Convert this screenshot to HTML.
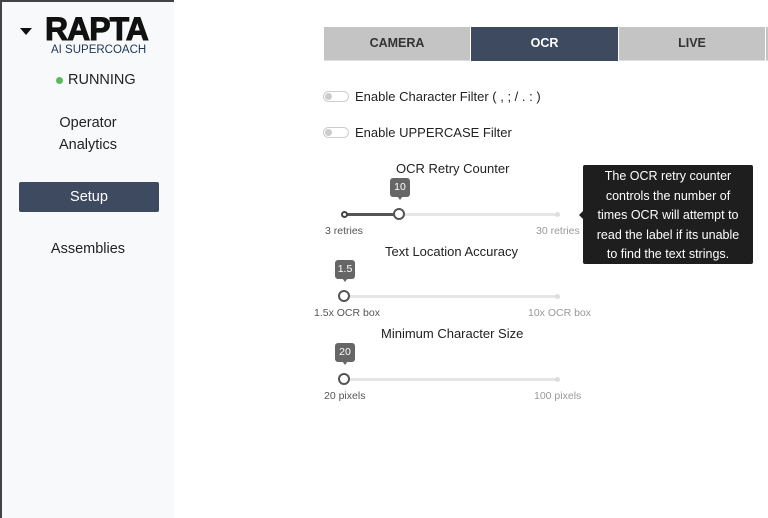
<!DOCTYPE html>
<html><head><meta charset="utf-8"><style>
*{box-sizing:border-box;margin:0;padding:0}
body{width:768px;height:518px;overflow:hidden;background:#fff;font-family:"Liberation Sans","DejaVu Sans",sans-serif;color:#222;position:relative}
.side{position:absolute;left:0;top:0;width:174px;height:518px;background:#f8f9fa;border-left:2px solid #444;border-top:2px solid #444}
.abs{position:absolute;white-space:nowrap}
.tab{position:absolute;top:27px;height:34px;background:#c4c4c4;font-size:12.5px;color:#333;text-align:center;line-height:33px;border-bottom:1px solid #ddd;font-weight:bold}
.tgl{position:absolute;width:26px;height:11px;border:1px solid #ccc;border-radius:6px;background:#fff}
.tgl:after{content:"";position:absolute;left:1px;top:1px;width:7px;height:7px;border-radius:50%;background:#ccc}
.lbl{font-size:13px;color:#222}
.track{position:absolute;height:3px;background:#e6e6e6;border-radius:2px}
.knob{position:absolute;width:12px;height:12px;border:2px solid #555;border-radius:50%;background:#fff}
.bub{position:absolute;width:20px;height:19px;background:#666;color:#fff;font-size:10.5px;text-align:center;line-height:19px;border-radius:3px}
.bub:after{content:"";position:absolute;left:7px;bottom:-3px;border-left:3px solid transparent;border-right:3px solid transparent;border-top:4px solid #666}
.sm{font-size:10.5px;color:#555}
.sm2{font-size:10.5px;color:#999}
.end{position:absolute;width:5px;height:5px;border-radius:50%;background:#ddd}
</style></head><body>
<div class="side"></div>
<div class="abs" style="left:20px;top:28px;width:0;height:0;border-left:6px solid transparent;border-right:6px solid transparent;border-top:7px solid #111"></div>
<div class="abs" style="left:45px;top:11px;font-size:32px;font-weight:900;letter-spacing:-1px;color:#111;font-family:'Liberation Sans',sans-serif;-webkit-text-stroke:1px #111">RAPTA</div>
<div class="abs" style="left:51px;top:44px;font-size:11.5px;color:#1d3557">AI SUPERCOACH</div>
<div class="abs" style="left:56px;top:77px;width:7px;height:7px;border-radius:50%;background:#5cb85c"></div>
<div class="abs" style="left:68px;top:72px;font-size:14.5px;color:#222">RUNNING</div>
<div class="abs" style="left:0;width:176px;top:112px;font-size:14.5px;text-align:center;line-height:22px">Operator<br>Analytics</div>
<div class="abs" style="left:19px;top:182px;width:140px;height:30px;background:#3e4a5f;color:#fff;font-size:14.5px;text-align:center;line-height:30px;border-radius:2px">Setup</div>
<div class="abs" style="left:0;width:176px;top:241px;font-size:14.5px;text-align:center">Assemblies</div>

<div class="tab" style="left:324px;width:146px">CAMERA</div>
<div class="tab" style="left:471px;width:147px;background:#3e4a5f;color:#fff;border-bottom:none">OCR</div>
<div class="tab" style="left:619px;width:146px">LIVE</div>
<div class="tab" style="left:766px;width:10px"></div>

<div class="tgl" style="left:323px;top:91px"></div>
<div class="abs lbl" style="left:355px;top:89px">Enable Character Filter ( , ; / . : )</div>
<div class="tgl" style="left:323px;top:127px"></div>
<div class="abs lbl" style="left:355px;top:125px">Enable UPPERCASE Filter</div>

<div class="abs lbl" style="left:396px;top:161px">OCR Retry Counter</div>
<div class="bub" style="left:390px;top:178px">10</div>
<div class="track" style="left:344px;top:213px;width:214px"></div>
<div class="track" style="left:344px;top:213px;width:56px;background:#555"></div>
<div class="abs" style="left:341px;top:211px;width:7px;height:7px;border:2px solid #444;border-radius:50%;background:#fff"></div>
<div class="end" style="left:555px;top:212px"></div>
<div class="knob" style="left:393px;top:208px"></div>
<div class="abs sm" style="left:325px;top:225px">3 retries</div>
<div class="abs sm2" style="left:536px;top:225px">30 retries</div>

<div class="abs" style="left:583px;top:165px;width:170px;height:99px;background:#1e1e1e;color:#fff;font-size:12.5px;line-height:19.5px;text-align:center;padding-top:2px;border-radius:2px">The OCR retry counter<br>controls the number of<br>times OCR will attempt to<br>read the label if its unable<br>to find the text strings.</div>
<div class="abs" style="left:579px;top:211px;width:0;height:0;border-top:4px solid transparent;border-bottom:4px solid transparent;border-right:4px solid #1e1e1e"></div>

<div class="abs lbl" style="left:385px;top:244px">Text Location Accuracy</div>
<div class="bub" style="left:335px;top:260px">1.5</div>
<div class="track" style="left:344px;top:295px;width:214px"></div>
<div class="end" style="left:555px;top:294px"></div>
<div class="knob" style="left:338px;top:290px"></div>
<div class="abs sm" style="left:314px;top:307px">1.5x OCR box</div>
<div class="abs sm2" style="left:528px;top:307px">10x OCR box</div>

<div class="abs lbl" style="left:381px;top:326px">Minimum Character Size</div>
<div class="bub" style="left:335px;top:343px">20</div>
<div class="track" style="left:344px;top:378px;width:214px"></div>
<div class="end" style="left:555px;top:377px"></div>
<div class="knob" style="left:338px;top:373px"></div>
<div class="abs sm" style="left:324px;top:390px">20 pixels</div>
<div class="abs sm2" style="left:534px;top:390px">100 pixels</div>
</body></html>
